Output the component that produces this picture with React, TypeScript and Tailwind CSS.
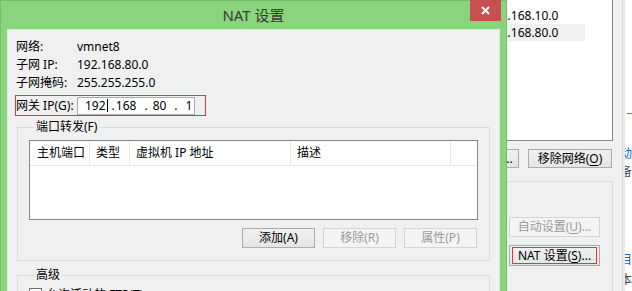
import React from 'react';

// Win8 style push button
const Btn: React.FC<{ children: React.ReactNode; className?: string; disabled?: boolean }> = ({ children, className = '', disabled }) => (
  <div
    className={
      'flex items-center justify-center whitespace-nowrap border ' +
      (disabled
        ? 'border-[#d5d5d5] bg-[#f4f4f4] text-[#9b9b9b] '
        : 'border-[#acacac] bg-linear-to-b from-[#f0f0f0] to-[#e5e5e5] text-black ') +
      className
    }
  >
    {children}
  </div>
);

const Key: React.FC<{ k: string }> = ({ k }) => (
  <span>
    (<span className="underline underline-offset-2">{k}</span>)
  </span>
);

const BackgroundWindow: React.FC = () => (
  <div className="flex h-full">
    <div className="flex w-[613px] flex-col">
      {/* network list */}
      <div className="h-[141px] border-r border-b border-[#828790] bg-white pt-[7px]">
        <div className="h-[17px] w-[585px] pl-[487px] leading-[17px]">192.168.10.0</div>
        <div className="h-[17px] w-[585px] bg-[#f0f0f0] pl-[487px] leading-[17px]">192.168.80.0</div>
      </div>
      <div className="mt-[8px] flex h-[19px] gap-[9px] pl-[435px]">
        <Btn className="w-[84px]">添加网络(E)...</Btn>
        <Btn className="w-[84px]">
          移除网络<Key k="O" />
        </Btn>
      </div>
      <div className="mt-[13px] flex flex-1 flex-col items-end border-t border-r border-[#dcdcdc] pt-[35px] pr-[12px]">
        <Btn disabled className="h-[20px] w-[91px]">
          自动设置<Key k="U" />...
        </Btn>
        <Btn className="mt-[8px] h-[21px] w-[91px]">
          <span className="flex h-[17px] w-[85px] items-center justify-center border border-[#e8353b]">
            NAT 设置<Key k="S" />...
          </span>
        </Btn>
      </div>
    </div>
    <div className="w-[9px]" />
    <div className="w-px bg-[#dadada]" />
    <div className="w-[2px] bg-[#e9e9e9]" />
    <div className="flex w-[7px] flex-col overflow-hidden bg-white">
      <div className="mt-[113px] ml-[2px] h-px bg-[#3c7fd0]" />
      <div className="mt-[33px] -ml-[5px] leading-[14px] text-[#1e5fb4]">动</div>
      <div className="mt-[4px] -ml-[5px] leading-[14px] text-[#444]">备</div>
      <div className="mt-[74px] -ml-[5px] leading-[14px] text-[#1e5fb4]">目</div>
      <div className="mt-[6px] -ml-[5px] leading-[14px] text-[#444]">本</div>
    </div>
  </div>
);

const Field: React.FC<{ label: string; value: string }> = ({ label, value }) => (
  <div className="flex h-[18px] items-center">
    <span className="w-[61px]">{label}</span>
    <span>{value}</span>
  </div>
);

const NatDialog: React.FC = () => (
  <div className="absolute top-0 left-0 flex h-[330px] w-[507px] flex-col border border-[#74c268] bg-[#8ad47e]">
    <div className="relative flex h-[28px] items-center justify-center text-[15px] text-[#3a3a3a]">
      NAT 设置
      <div className="absolute top-[-1px] right-[5px] flex h-[21px] w-[31px] items-center justify-center bg-[#c75050]">
        <svg width="9" height="9" viewBox="0 0 9 9">
          <path d="M1 1 L8 8 M8 1 L1 8" stroke="#fff" strokeWidth="2" />
        </svg>
      </div>
    </div>

    <div className="mx-[6px] flex flex-1 flex-col border border-[#e4e4e4] bg-[#f0f0f0]">
      <div className="pt-[8px] pl-[8px]">
        <Field label="网络:" value="vmnet8" />
        <Field label="子网 IP:" value="192.168.80.0" />
        <Field label="子网掩码:" value="255.255.255.0" />
      </div>

      {/* gateway, marked in red */}
      <div className="mt-[3px] ml-[7px] flex h-[21px] w-[191px] items-center border border-[#e8353b]">
        <span className="w-[61px]">网关 IP(G):</span>
        <div className="flex h-[18px] w-[118px] items-center border border-[#abadb3] bg-white pl-[7px] whitespace-nowrap">
          <span>192</span>
          <span className="ml-px h-[13px] w-px bg-black" />
          <span className="ml-[4px]">.</span>
          <span className="ml-px">168</span>
          <span className="ml-[8px]">.</span>
          <span className="ml-[5px]">80</span>
          <span className="ml-[8px]">.</span>
          <span className="ml-[8px]">1</span>
        </div>
      </div>

      <fieldset className="mx-[9px] mt-[3px] border border-[#dcdcdc] px-[11px] pb-[12px]">
        <legend className="ml-[5px] px-[2px] leading-[16px]">端口转发(F)</legend>
        <div className="mt-[5px] h-[80px] border border-[#828790] bg-white">
          <div className="flex h-[25px] border-b border-[#e3e9f1]">
            <div className="flex w-[60px] items-center border-r border-[#e3e9f1] pl-[7px]">主机端口</div>
            <div className="flex w-[40px] items-center border-r border-[#e3e9f1] pl-[6px]">类型</div>
            <div className="flex w-[161px] items-center border-r border-[#e3e9f1] pl-[6px]">虚拟机 IP 地址</div>
            <div className="flex w-[160px] items-center border-r border-[#e3e9f1] pl-[6px]">描述</div>
          </div>
        </div>
        <div className="mt-[8px] flex justify-end gap-[8px] pr-px">
          <Btn className="h-[20px] w-[73px]">添加(A)</Btn>
          <Btn disabled className="h-[20px] w-[73px]">移除(R)</Btn>
          <Btn disabled className="h-[20px] w-[73px]">属性(P)</Btn>
        </div>
      </fieldset>

      <fieldset className="mx-[9px] mt-[6px] flex-1 border border-[#dcdcdc] px-[11px]">
        <legend className="ml-[5px] px-[2px] leading-[16px]">高级</legend>
        <div className="mt-[5px] flex items-center gap-[4px]">
          <span className="h-[13px] w-[13px] border border-[#707070] bg-white" />
          <span className="leading-[13px]">允许活动的 FTP(T)</span>
        </div>
      </fieldset>
    </div>
  </div>
);

export default function App() {
  return (
    <div className="relative h-[291px] w-[632px] overflow-hidden bg-[#f0f0f0] font-['Noto_Sans','Noto_Sans_CJK_SC',sans-serif] text-[12px] text-black">
      <BackgroundWindow />
      <NatDialog />
    </div>
  );
}
